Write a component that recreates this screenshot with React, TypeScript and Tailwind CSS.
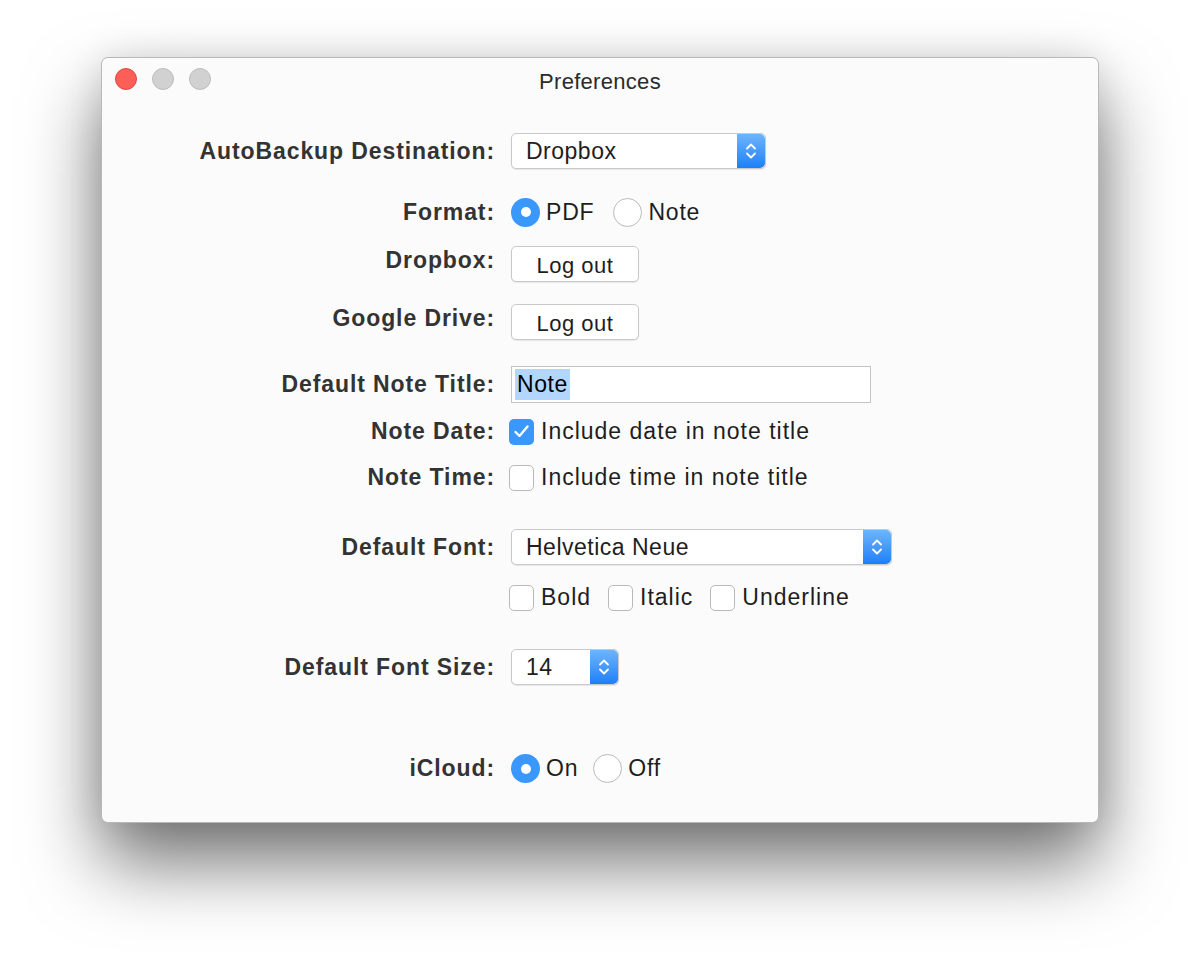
import type { ReactNode } from "react";

const font = "font-['Helvetica_Neue','Liberation_Sans',Arial,sans-serif]";

function Stepper() {
  return (
    <div className="flex h-full w-[28px] shrink-0 items-center justify-center rounded-r-[5px] bg-gradient-to-b from-[#6db4fb] to-[#1a7ff9]">
      <svg width="14" height="22" viewBox="0 0 14 22" fill="none" aria-hidden="true">
        <path d="M3 8.5 L7 4.5 L11 8.5" stroke="white" strokeWidth="1.8" strokeLinecap="round" strokeLinejoin="round" />
        <path d="M3 13.5 L7 17.5 L11 13.5" stroke="white" strokeWidth="1.8" strokeLinecap="round" strokeLinejoin="round" />
      </svg>
    </div>
  );
}

function Popup({ value, width }: { value: string; width: string }) {
  return (
    <div
      className={`flex h-[36px] ${width} items-stretch rounded-[5px] border border-[#c9c9c9] bg-white shadow-[0_1px_1px_rgba(0,0,0,0.08)]`}
    >
      <span className="flex flex-1 items-center pl-[14px] text-[23px] tracking-[0.5px] text-[#1e1e1e]">{value}</span>
      <Stepper />
    </div>
  );
}

function Radio({ checked, label }: { checked?: boolean; label: string }) {
  return (
    <div className="flex items-center gap-[6px]">
      {checked ? (
        <span className="flex h-[29px] w-[29px] items-center justify-center rounded-full bg-[#3a97fb]">
          <span className="h-[10px] w-[10px] rounded-full bg-white" />
        </span>
      ) : (
        <span className="h-[29px] w-[29px] rounded-full border border-[#b9b9b9] bg-white" />
      )}
      <span className="text-[23px] tracking-[0.8px] text-[#1e1e1e]">{label}</span>
    </div>
  );
}

function Checkbox({ checked, label }: { checked?: boolean; label: string }) {
  return (
    <div className="flex items-center gap-[7px]">
      {checked ? (
        <span className="flex h-[26px] w-[25px] items-center justify-center rounded-[5px] bg-[#3a97fb]">
          <svg width="17" height="15" viewBox="0 0 17 15" fill="none" aria-hidden="true">
            <path d="M2.5 8 L6.5 12 L14.5 2.5" stroke="white" strokeWidth="2.4" strokeLinecap="round" strokeLinejoin="round" />
          </svg>
        </span>
      ) : (
        <span className="h-[26px] w-[25px] rounded-[5px] border border-[#b9b9b9] bg-white" />
      )}
      <span className="text-[23px] tracking-[1px] text-[#1e1e1e]">{label}</span>
    </div>
  );
}

function Button({ children }: { children: ReactNode }) {
  return (
    <div className="flex h-[36px] w-[128px] items-center justify-center rounded-[5px] border border-[#c9c9c9] bg-white pt-[3px] text-[22px] tracking-[0.5px] text-[#1e1e1e] shadow-[0_1px_1px_rgba(0,0,0,0.08)]">
      {children}
    </div>
  );
}

function Row({
  label,
  height,
  top,
  labelTop,
  children,
}: {
  label?: string;
  height: string;
  top: string;
  labelTop?: boolean;
  children: ReactNode;
}) {
  return (
    <div className={`flex ${height} ${top} ${labelTop ? "items-start" : "items-center"}`}>
      <div
        className={`w-[393px] shrink-0 text-right text-[23px] font-bold tracking-[0.9px] text-[#333] ${
          labelTop ? "leading-[28px]" : ""
        }`}
      >
        {label}
      </div>
      <div className="ml-[16px] flex h-full items-center">{children}</div>
    </div>
  );
}

export default function App() {
  return (
    <div className={`min-h-[968px] bg-white pl-[101px] pt-[57px] ${font}`}>
      <div className="h-[766px] w-[998px] rounded-[7px] border border-[#b8b8b8] bg-[#fbfbfb] shadow-[0_40px_75px_rgba(0,0,0,0.55),0_0_35px_rgba(0,0,0,0.1)]">
        {/* title bar */}
        <div className="relative flex h-[44px] items-center justify-center">
          <div className="absolute left-[13px] top-[10px] flex gap-[15px]">
            <span className="h-[22px] w-[22px] rounded-full border border-[#e2463f] bg-[#fc5f57]" />
            <span className="h-[22px] w-[22px] rounded-full border border-[#bcbcbc] bg-[#d1d1d1]" />
            <span className="h-[22px] w-[22px] rounded-full border border-[#bcbcbc] bg-[#d1d1d1]" />
          </div>
          <span className="pt-[2px] text-[22px] tracking-[0.3px] text-[#2b2b2b]">Preferences</span>
        </div>

        <div className="flex flex-col pt-[31px]">
          <Row label="AutoBackup Destination:" height="h-[36px]" top="mt-0">
            <Popup value="Dropbox" width="w-[255px]" />
          </Row>

          <Row label="Format:" height="h-[30px]" top="mt-[28px]">
            <div className="flex items-center gap-[19px]">
              <Radio checked label="PDF" />
              <Radio label="Note" />
            </div>
          </Row>

          <Row label="Dropbox:" height="h-[36px]" top="mt-[19px]" labelTop>
            <Button>Log out</Button>
          </Row>

          <Row label="Google Drive:" height="h-[36px]" top="mt-[22px]" labelTop>
            <Button>Log out</Button>
          </Row>

          <Row label="Default Note Title:" height="h-[37px]" top="mt-[26px]">
            <div className="flex h-[37px] w-[360px] items-center border border-[#c3c3c3] bg-white pl-[3px]">
              <span className="bg-[#b3d6fe] px-[2px] text-[23px] leading-[31px] tracking-[0.6px] text-black">Note</span>
            </div>
          </Row>

          <Row label="Note Date:" height="h-[27px]" top="mt-[15px]">
            <div className="-ml-[2px]">
              <Checkbox checked label="Include date in note title" />
            </div>
          </Row>

          <Row label="Note Time:" height="h-[27px]" top="mt-[19px]">
            <div className="-ml-[2px]">
              <Checkbox label="Include time in note title" />
            </div>
          </Row>

          <Row label="Default Font:" height="h-[36px]" top="mt-[38px]">
            <Popup value="Helvetica Neue" width="w-[381px]" />
          </Row>

          <Row height="h-[27px]" top="mt-[19px]">
            <div className="-ml-[2px] flex items-center gap-[17px]">
              <Checkbox label="Bold" />
              <Checkbox label="Italic" />
              <Checkbox label="Underline" />
            </div>
          </Row>

          <Row label="Default Font Size:" height="h-[36px]" top="mt-[38px]">
            <Popup value="14" width="w-[108px]" />
          </Row>

          <Row label="iCloud:" height="h-[29px]" top="mt-[69px]">
            <div className="flex items-center gap-[15px]">
              <Radio checked label="On" />
              <Radio label="Off" />
            </div>
          </Row>
        </div>
      </div>
    </div>
  );
}
